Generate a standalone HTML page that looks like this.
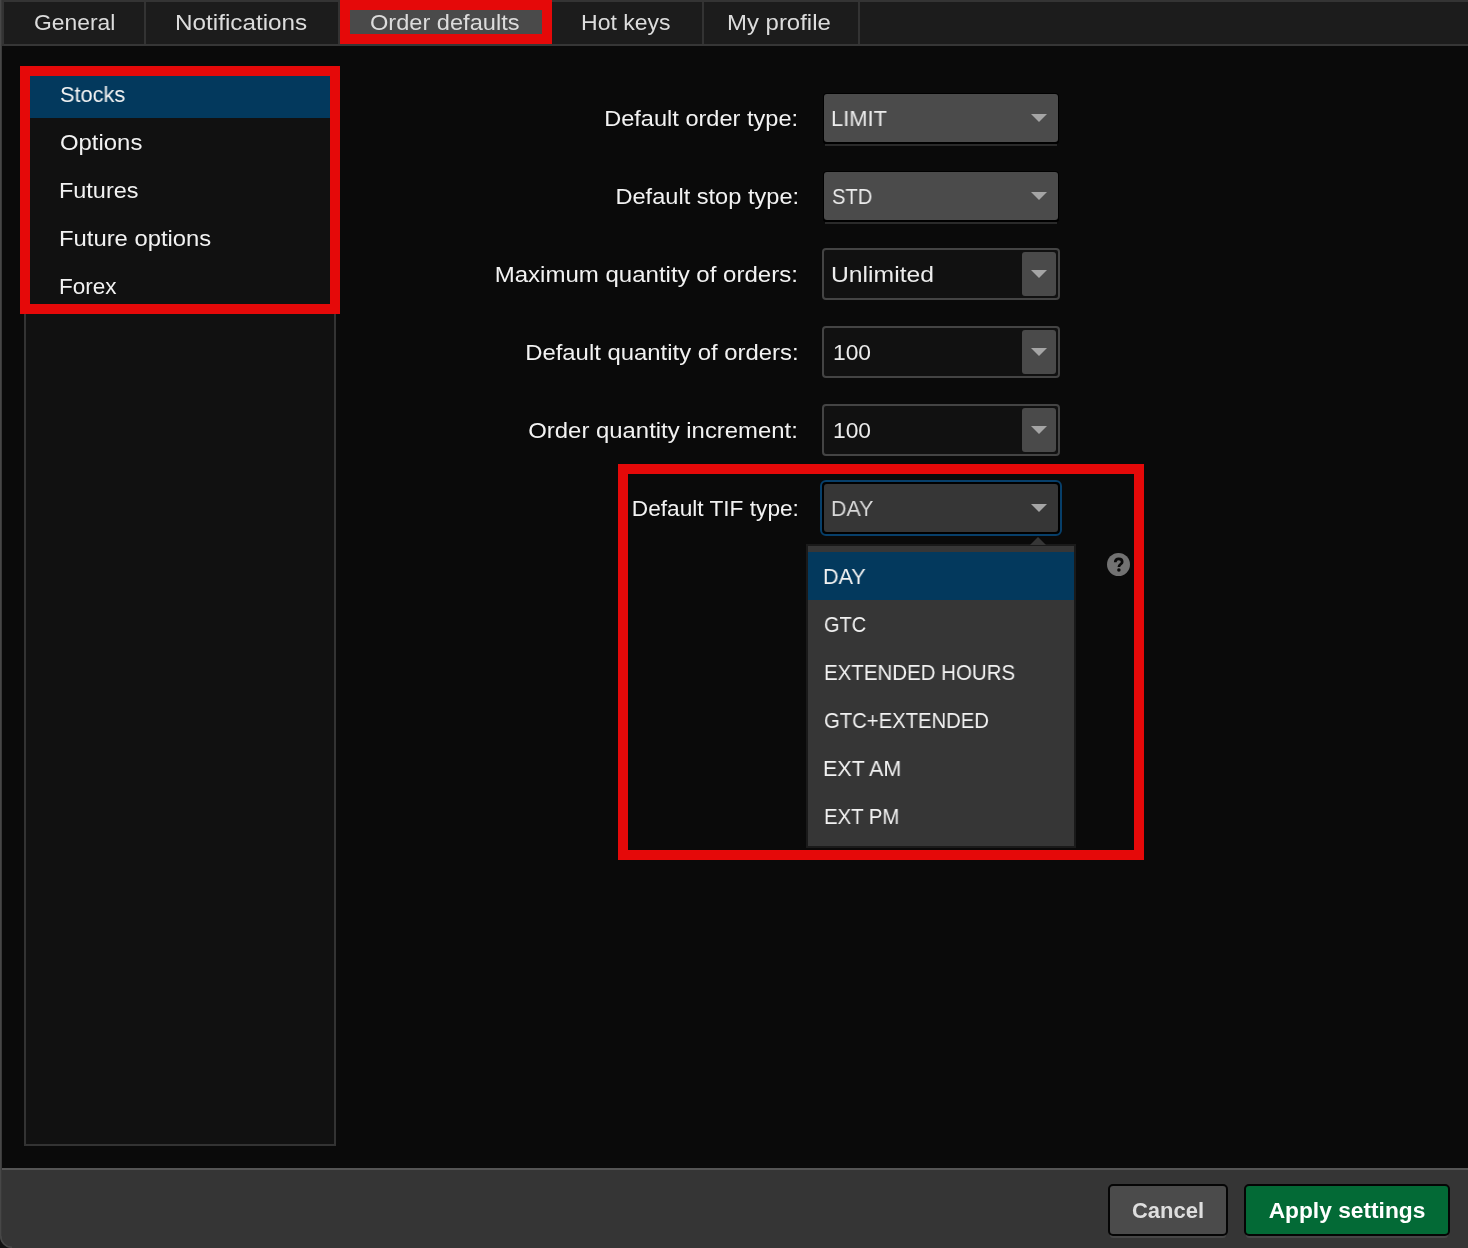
<!DOCTYPE html>
<html><head><meta charset="utf-8">
<style>
html,body{margin:0;padding:0;background:#0a0a0a;}
body{width:1468px;height:1248px;overflow:hidden;position:relative;font-family:"Liberation Sans",sans-serif;}
.a{position:absolute;}
.t{position:absolute;white-space:pre;will-change:transform;font-size:22.5px;line-height:50px;height:48px;color:#f2f2f2;}
.tabbar{left:0;top:0;width:1468px;height:46px;background:#1c1c1c;}
.tab-top{left:0;top:0;width:1468px;height:2px;background:#343434;}
.tab-bot{left:0;top:44px;width:1468px;height:2px;background:#363636;}
.sep{top:2px;width:2px;height:42px;background:#333;}
.tabtxt{color:#dcdcdc;font-size:22.5px;}
.red{position:absolute;border:10px solid #e50909;box-sizing:border-box;}
.list{left:24px;top:68px;width:312px;height:1078px;box-sizing:border-box;border:2px solid #333;background:#111;}
.sel1{left:824px;width:234px;height:48px;background:#4b4b4b;border-radius:3px;}
.sel1sh{left:823px;width:236px;height:4px;background:#000;border-radius:0 0 3px 3px;}
.sel1o{left:823px;width:236px;height:50px;background:#000;border-radius:4px;}
.sel1sh2{left:825px;width:232px;height:2px;background:#2a2a2a;}
.spin{left:822px;width:238px;height:52px;box-sizing:border-box;border:2px solid #444;border-radius:4px;background:#111;}
.spinbtn{left:1022px;width:34px;height:44px;background:#4a4a4a;border-radius:3px;}
.arr{width:0;height:0;border-left:8px solid transparent;border-right:8px solid transparent;border-top:8.5px solid #a5a5a5;}
.val{color:#ececec;}
.footer{left:0;top:1168px;width:1468px;height:80px;background:#353535;border-top:2px solid #555;box-sizing:border-box;}
</style></head><body>
<!-- window edge -->


<!-- tabs -->
<div class="a tabbar"></div>
<div class="a tab-top"></div>
<div class="a tab-bot"></div>
<div class="a" style="left:2px;top:0;width:2px;height:46px;background:#333"></div>
<div class="a sep" style="left:144px"></div>
<div class="a sep" style="left:338px"></div>
<div class="a" style="left:340px;top:2px;width:212px;height:42px;background:#4a4a4a"></div>

<div class="a sep" style="left:702px"></div>
<div class="a sep" style="left:858px"></div>
<div class="t tabtxt" style="transform:scaleX(1.0158);transform-origin:0 0;left:34px;top:-2px">General</div>
<div class="t tabtxt" style="transform:scaleX(1.0787);transform-origin:0 0;left:175px;top:-2px">Notifications</div>
<div class="t tabtxt" style="transform:scaleX(1.0486);transform-origin:0 0;left:370px;top:-2px">Order defaults</div>
<div class="t tabtxt" style="transform:scaleX(1.0234);transform-origin:0 0;left:581px;top:-2px">Hot keys</div>
<div class="t tabtxt" style="transform:scaleX(1.0640);transform-origin:0 0;left:727px;top:-2px">My profile</div>

<!-- left list -->
<div class="a list"></div>
<div class="a" style="left:26px;top:70px;width:308px;height:48px;background:#03395d"></div>
<div class="t" style="transform:scaleX(0.9668);transform-origin:0 0;left:60px;top:70px">Stocks</div>
<div class="t" style="transform:scaleX(1.0617);transform-origin:0 0;left:60px;top:118px">Options</div>
<div class="t" style="transform:scaleX(1.0416);transform-origin:0 0;left:59px;top:166px">Futures</div>
<div class="t" style="transform:scaleX(1.0587);transform-origin:0 0;left:59px;top:214px">Future options</div>
<div class="t" style="transform:scaleX(1.0020);transform-origin:0 0;left:59px;top:262px">Forex</div>

<!-- form labels -->
<div class="t" style="transform:scaleX(1.0478);transform-origin:100% 0;right:670px;top:94px">Default order type:</div>
<div class="t" style="transform:scaleX(1.0491);transform-origin:100% 0;right:669px;top:172px">Default stop type:</div>
<div class="t" style="transform:scaleX(1.0682);transform-origin:100% 0;right:670px;top:250px">Maximum quantity of orders:</div>
<div class="t" style="transform:scaleX(1.0615);transform-origin:100% 0;right:669px;top:328px">Default quantity of orders:</div>
<div class="t" style="transform:scaleX(1.0620);transform-origin:100% 0;right:670px;top:406px">Order quantity increment:</div>
<div class="t" style="transform:scaleX(1.0074);transform-origin:100% 0;right:669px;top:484px">Default TIF type:</div>

<!-- row1 -->
<div class="a sel1o" style="top:93px"></div><div class="a sel1sh" style="top:140px"></div>
<div class="a sel1sh2" style="top:144px"></div>
<div class="a sel1" style="top:94px"></div>
<div class="t val" style="transform:scaleX(0.9731);transform-origin:0 0;left:831px;top:94px">LIMIT</div>
<div class="a arr" style="left:1031px;top:114px"></div>
<!-- row2 -->
<div class="a sel1o" style="top:171px"></div><div class="a sel1sh" style="top:218px"></div>
<div class="a sel1sh2" style="top:222px"></div>
<div class="a sel1" style="top:172px"></div>
<div class="t val" style="transform:scaleX(0.8960);transform-origin:0 0;left:832px;top:172px">STD</div>
<div class="a arr" style="left:1031px;top:192px"></div>
<!-- row3 -->
<div class="a spin" style="top:248px"></div>
<div class="a spinbtn" style="top:252px"></div>
<div class="t val" style="transform:scaleX(1.0981);transform-origin:0 0;left:831px;top:250px">Unlimited</div>
<div class="a arr" style="left:1031px;top:270px"></div>
<!-- row4 -->
<div class="a spin" style="top:326px"></div>
<div class="a spinbtn" style="top:330px"></div>
<div class="t val" style="transform:scaleX(1.0134);transform-origin:0 0;left:833px;top:328px">100</div>
<div class="a arr" style="left:1031px;top:348px"></div>
<!-- row5 -->
<div class="a spin" style="top:404px"></div>
<div class="a spinbtn" style="top:408px"></div>
<div class="t val" style="transform:scaleX(1.0134);transform-origin:0 0;left:833px;top:406px">100</div>
<div class="a arr" style="left:1031px;top:426px"></div>
<!-- row6 focused -->
<div class="a" style="left:820px;top:480px;width:242px;height:56px;box-sizing:border-box;border:2px solid #073f6a;border-radius:6px;background:#000"></div>
<div class="a" style="left:824px;top:484px;width:234px;height:48px;background:#363636;border-radius:3px"></div>
<div class="t val" style="transform:scaleX(0.9518);transform-origin:0 0;left:831px;top:484px;color:#d8d8d8">DAY</div>
<div class="a arr" style="left:1031px;top:504px"></div>

<!-- popup -->
<div class="a" style="left:806px;top:544px;width:270px;height:304px;background:#1a1a1a"></div>
<div class="a" style="left:808px;top:546px;width:266px;height:300px;background:#363636"></div>
<div class="a" style="left:1030px;top:537px;width:0;height:0;border-left:8px solid transparent;border-right:8px solid transparent;border-bottom:8px solid #363636"></div>
<div class="a" style="left:808px;top:552px;width:266px;height:48px;background:#03395d"></div>
<div class="t" style="transform:scaleX(0.9593);transform-origin:0 0;left:823px;top:552px">DAY</div>
<div class="t" style="transform:scaleX(0.8868);transform-origin:0 0;left:824px;top:600px">GTC</div>
<div class="t" style="transform:scaleX(0.9102);transform-origin:0 0;left:824px;top:648px">EXTENDED HOURS</div>
<div class="t" style="transform:scaleX(0.8999);transform-origin:0 0;left:824px;top:696px">GTC+EXTENDED</div>
<div class="t" style="transform:scaleX(0.9548);transform-origin:0 0;left:823px;top:744px">EXT AM</div>
<div class="t" style="transform:scaleX(0.9049);transform-origin:0 0;left:824px;top:792px">EXT PM</div>

<!-- help icon -->
<svg class="a" style="left:1107px;top:553px" width="23" height="23" viewBox="0 0 23 23"><circle cx="11.5" cy="11.5" r="11.5" fill="#727272"/><path d="M8.2,9.3 C8.3,6.9 9.8,5.8 11.7,5.8 C13.8,5.8 15.2,7.1 15.2,8.9 C15.2,11.2 11.9,11.4 11.9,13.9" fill="none" stroke="#0a0a0a" stroke-width="2.7" stroke-linecap="butt"/><circle cx="11.9" cy="16.9" r="1.75" fill="#0a0a0a"/></svg>
<!-- footer -->
<div class="a footer"></div>
<div class="a" style="left:1110px;top:1235px;width:116px;height:3px;background:#474747;border-radius:0 0 3px 3px"></div>
<div class="a" style="left:1246px;top:1235px;width:202px;height:3px;background:#474747;border-radius:0 0 3px 3px"></div>
<div class="a" style="left:1108px;top:1184px;width:120px;height:52px;box-sizing:border-box;border:2px solid #050505;border-radius:5px;background:#4b4b4b"></div>
<div class="t" style="left:1108px;top:1186px;width:120px;text-align:center;font-weight:bold;color:#dedede;font-size:22px">Cancel</div>
<div class="a" style="left:1244px;top:1184px;width:206px;height:52px;box-sizing:border-box;border:2px solid #050505;border-radius:5px;background:#036a36"></div>
<div class="t" style="transform:scaleX(1.0337);transform-origin:50% 0;left:1244px;top:1186px;width:206px;text-align:center;font-weight:bold;color:#ffffff;font-size:22px">Apply settings</div>

<!-- window edge -->
<div class="a" style="left:0;top:0;width:1px;height:1248px;background:#474747"></div>
<div class="a" style="left:1px;top:0;width:1px;height:1248px;background:#3a3a3a"></div>
<svg class="a" style="left:0;top:1236px" width="12" height="12" viewBox="0 0 12 12"><path d="M0,0 L0,12 L12,12 A12,12 0 0 1 0,0 Z" fill="#111"/><path d="M0.75,0 A11.25,11.25 0 0 0 12,11.25" fill="none" stroke="#474747" stroke-width="1.5"/></svg>
<!-- red annotation boxes -->
<div class="red" style="left:340px;top:0;width:212px;height:44px"></div>
<div class="red" style="left:20px;top:66px;width:320px;height:248px"></div>
<div class="red" style="left:618px;top:464px;width:526px;height:396px"></div>
</body></html>
